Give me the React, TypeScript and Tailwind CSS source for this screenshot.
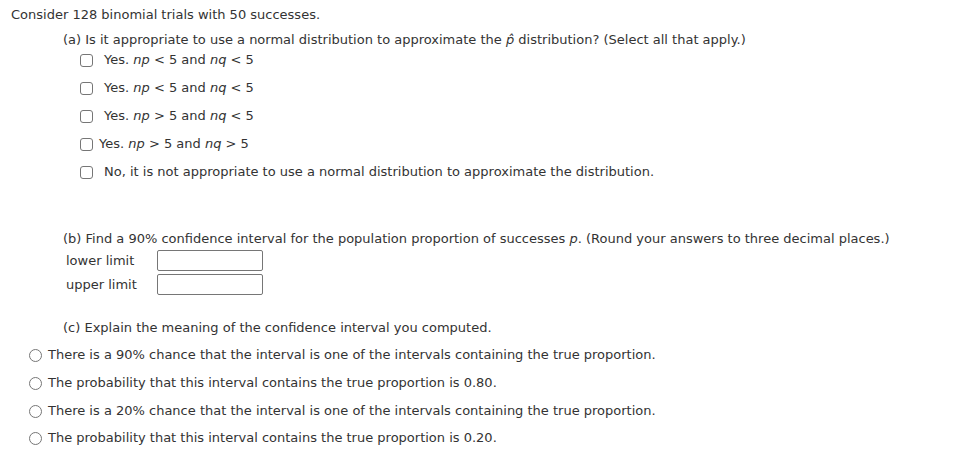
import React from 'react';

const font = { fontFamily: 'Verdana, "DejaVu Sans", sans-serif' };

function Checkbox() {
  return <span className="inline-block w-[13px] h-[13px] border border-[#767676] rounded-[3px] bg-white shrink-0" />;
}

function Radio() {
  return <span className="inline-block w-[13px] h-[13px] border border-[#767676] rounded-full bg-white shrink-0" />;
}

const i = (s: string) => <i>{s}</i>;

const checks: { content: React.ReactNode; gap: string; mt: string }[] = [
  { content: <>Yes. {i('np')} &lt; 5 and {i('nq')} &lt; 5</>, gap: 'ml-[11px]', mt: 'mt-[2px]' },
  { content: <>Yes. {i('np')} &lt; 5 and {i('nq')} &lt; 5</>, gap: 'ml-[11px]', mt: 'mt-[10px]' },
  { content: <>Yes. {i('np')} &gt; 5 and {i('nq')} &lt; 5</>, gap: 'ml-[11px]', mt: 'mt-[10px]' },
  { content: <>Yes. {i('np')} &gt; 5 and {i('nq')} &gt; 5</>, gap: 'ml-[6px]', mt: 'mt-[10px]' },
  { content: <>No, it is not appropriate to use a normal distribution to approximate the distribution.</>, gap: 'ml-[11px]', mt: 'mt-[10px]' },
];

const radios = [
  { text: 'There is a 90% chance that the interval is one of the intervals containing the true proportion.', mt: 'mt-[9px]' },
  { text: 'The probability that this interval contains the true proportion is 0.80.', mt: 'mt-[10px]' },
  { text: 'There is a 20% chance that the interval is one of the intervals containing the true proportion.', mt: 'mt-[10px]' },
  { text: 'The probability that this interval contains the true proportion is 0.20.', mt: 'mt-[9px]' },
];

export default function App() {
  return (
    <div className="w-[957px] h-[468px] bg-white text-[#333] text-[13px] overflow-hidden" style={font}>
      <div className="pt-[6px] pl-[11px] leading-[18px]">
        Consider 128 binomial trials with 50 successes.
      </div>

      <div className="pl-[63px] mt-[7px] leading-[18px]">
        (a) Is it appropriate to use a normal distribution to approximate the <i>p̂</i> distribution? (Select all that apply.)
      </div>
      <div className="pl-[80px]">
        {checks.map((c, idx) => (
          <div key={idx} className={`flex items-center h-[18px] leading-[18px] ${c.mt}`}>
            <Checkbox />
            <span className={c.gap}>{c.content}</span>
          </div>
        ))}
      </div>

      <div className="pl-[63px] mt-[49px] leading-[18px]">
        (b) Find a 90% confidence interval for the population proportion of successes <i>p</i>. (Round your answers to three decimal places.)
      </div>
      <div className="pl-[66px]">
        <div className="flex items-center h-[21px] mt-[2px]">
          <span className="w-[91px]">lower limit</span>
          <span className="w-[106px] h-[21px] border border-[#767676] rounded-[2px]" />
        </div>
        <div className="flex items-center h-[21px] mt-[3px]">
          <span className="w-[91px]">upper limit</span>
          <span className="w-[106px] h-[21px] border border-[#767676] rounded-[2px]" />
        </div>
      </div>

      <div className="pl-[63px] mt-[24px] leading-[18px]">
        (c) Explain the meaning of the confidence interval you computed.
      </div>
      <div className="pl-[29px]">
        {radios.map((r, idx) => (
          <div key={idx} className={`flex items-center h-[18px] leading-[18px] ${r.mt}`}>
            <Radio />
            <span className="ml-[6px]">{r.text}</span>
          </div>
        ))}
      </div>
    </div>
  );
}
